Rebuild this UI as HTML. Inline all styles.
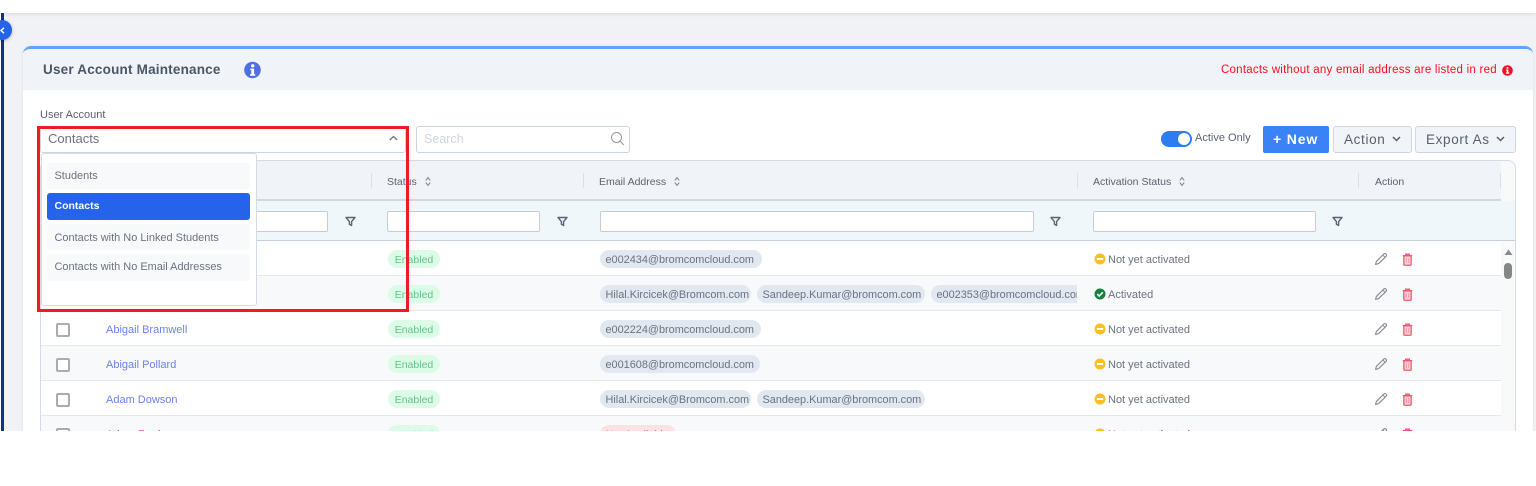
<!DOCTYPE html>
<html><head><meta charset="utf-8"><title>User Account Maintenance</title>
<style>
*{box-sizing:border-box}
html,body{margin:0;padding:0;width:1536px;height:486px;background:#fff;overflow:hidden;font-family:"Liberation Sans",sans-serif}
.a{position:absolute;white-space:nowrap}
#clip{position:absolute;left:0;top:0;width:1536px;height:431px;overflow:hidden;background:#f0f2f6;filter:blur(.3px)}
#top{position:absolute;left:0;top:0;width:1536px;height:13px;background:#fff;box-shadow:0 1px 4px rgba(0,0,0,.1)}
#nav{position:absolute;left:1px;top:13px;width:3px;height:418px;background:#14307e}
#navw{position:absolute;left:0;top:13px;width:1px;height:418px;background:#fff}
#card{position:absolute;left:23px;top:46px;width:1510px;height:420px;background:#fff;border-radius:8px 8px 0 0;border-top:3px solid #60a5fa;overflow:hidden;box-shadow:0 0 3px rgba(0,0,0,.08)}
.row{position:absolute;left:41px;width:1460px;height:35px;border-bottom:1px solid #e5e7eb}
.chk{position:absolute;left:15px;top:12px;width:14px;height:14px;border:2px solid #acacac;border-radius:2px;background:#fff}
.nm{position:absolute;left:65px;top:0;line-height:39px;font-size:11px;color:#6b82f2}
.en{position:absolute;left:347px;top:9px;height:18px;width:52px;border-radius:9px;background:#dcfce7;color:#65c28a;font-size:10.5px;line-height:20px;text-align:center}
.pill{position:absolute;top:9px;height:18px;border-radius:9px;background:#e2e8f0;color:#6b7280;font-size:10.9px;line-height:20px;padding-left:5.5px;overflow:hidden;white-space:nowrap}
.st{position:absolute;left:1067px;top:0;line-height:38px;font-size:11px;color:#6b7280}
.ic{position:absolute;left:1052.5px;top:12px}
.pen{position:absolute;left:1333px;top:11px}
.tr{position:absolute;left:1361px;top:11.5px}
.th{font-size:10.5px;color:#5b6270;line-height:15px;top:175px}
.sep{position:absolute;top:173px;width:1px;height:15px;background:#dbe0e7}
.fi{position:absolute;top:211px;height:21px;background:#fff;border:1px solid #c9cdd3;border-radius:2px}
.mi{position:absolute;left:47px;width:203px;border-radius:3px;background:#f8f9fb;color:#6b7280;font-size:10.96px;padding-left:7.5px}
.btn{position:absolute;top:126px;height:27px;background:#f1f4f9;border:1px solid #cfd6e0;border-radius:3px;color:#586171;font-size:13.5px;line-height:25px;letter-spacing:.65px}
</style></head>
<body>
<svg width="0" height="0" style="position:absolute">
<defs>
<symbol id="sort" viewBox="0 0 8 11"><path d="M1.8 4.4 4 1.6 6.2 4.4M1.8 6.6 4 9.4 6.2 6.6" fill="none" stroke="#7a8290" stroke-width="1"/></symbol>
<symbol id="fun" viewBox="0 0 11 11"><path d="M1 1.5h9L6.6 5.6v3.9L4.4 8.3V5.6z" fill="none" stroke="#5b6472" stroke-width="1.4" stroke-linejoin="round"/></symbol>
<symbol id="min" viewBox="0 0 12 12"><circle cx="6" cy="6" r="5.5" fill="#fbbf24"/><rect x="2.8" y="5" width="6.4" height="2" fill="#fff" rx=".6"/></symbol>
<symbol id="ok" viewBox="0 0 12 12"><circle cx="6" cy="6" r="5.5" fill="#15803d"/><path d="M3.2 6.1 5.2 8 8.8 4.3" fill="none" stroke="#fff" stroke-width="1.6"/></symbol>
<symbol id="pen" viewBox="0 0 14 14"><path d="M1.6 12.4l.8-3L9.8 2a1.4 1.4 0 0 1 2 0l.3.3a1.4 1.4 0 0 1 0 2L4.7 11.6z" fill="none" stroke="#8a8f96" stroke-width="1.2" stroke-linejoin="round"/><path d="M8.8 3l2.3 2.3" stroke="#8a8f96" stroke-width="1"/></symbol>
<symbol id="tr" viewBox="0 0 12 14"><path d="M2 3h8v9.3c0 .6-.4 1-1 1H3c-.6 0-1-.4-1-1z" fill="#fdd5da"/><path d="M.8 2.8h10.4M4 2.6V1.2h4v1.4M2 3v9.2c0 .7.5 1.1 1.1 1.1h5.8c.6 0 1.1-.4 1.1-1.1V3z" fill="none" stroke="#f4566f" stroke-width="1.4"/><path d="M4.7 5.5v5.5M7.3 5.5v5.5" stroke="#f4a0ae" stroke-width="1.3"/></symbol>
</defs></svg>

<div id="clip">
<div id="top"></div>
<div id="navw"></div><div id="nav"></div>
<div class="a" style="left:-8px;top:20px;width:20px;height:20px;border-radius:50%;background:#2563eb;box-shadow:0 1px 3px rgba(0,0,0,.25)"></div>
<svg class="a" style="left:0;top:27px" width="5" height="7" viewBox="0 0 5 7"><path d="M4 .8 1 3.5 4 6.2" fill="none" stroke="#fff" stroke-width="1.4"/></svg>

<div id="card"><div style="height:41px;background:#f0f3f8"></div></div>

<div class="a" style="left:43px;top:62px;font-size:13.5px;font-weight:bold;line-height:16px;color:#4b5563;letter-spacing:.2px">User Account Maintenance</div>
<svg class="a" style="left:244px;top:61px" width="17" height="18" viewBox="0 0 17 18"><circle cx="8.5" cy="9" r="8.3" fill="#4f70e3"/><circle cx="8.7" cy="4.8" r="1.7" fill="#fff"/><path d="M6.3 7.6h3.8v5.6h1.2v1.5H6v-1.5h1.3V9.1h-1z" fill="#fff"/></svg>
<div class="a" style="left:1221px;top:63px;font-size:11.5px;line-height:14px;color:#f5101f;letter-spacing:.24px">Contacts without any email address are listed in red</div>
<svg class="a" style="left:1502px;top:65px" width="11" height="11" viewBox="0 0 11 11"><circle cx="5.5" cy="5.5" r="5.3" fill="#ee1122"/><rect x="4.6" y="2" width="1.8" height="1.6" fill="#fff"/><path d="M3.9 4.5h2.5v3h.8v1.2H3.9V7.5h.8v-2h-.8z" fill="#fff"/></svg>

<div class="a" style="left:40px;top:108px;font-size:11px;line-height:14px;color:#5b6270">User Account</div>

<div class="a" style="left:40px;top:127px;width:366px;height:26px;border:1px solid #cbd5e1;border-radius:3px;background:#fff"></div>
<div class="a" style="left:48px;top:131px;font-size:13px;line-height:16px;color:#6b7280">Contacts</div>
<svg class="a" style="left:389px;top:135px" width="9" height="6" viewBox="0 0 9 6"><path d="M.8 5 4.5 1.5 8.2 5" fill="none" stroke="#6b7280" stroke-width="1.3"/></svg>

<div class="a" style="left:416px;top:126px;width:214px;height:27px;border:1px solid #cbd5e1;border-radius:3px;background:#fff"></div>
<div class="a" style="left:424px;top:131px;font-size:12.5px;line-height:16px;color:#cfd6e0">Search</div>
<svg class="a" style="left:610px;top:131px" width="15" height="15" viewBox="0 0 15 15"><circle cx="6.5" cy="6.5" r="5" fill="none" stroke="#9299a3" stroke-width="1"/><path d="M10.2 10.2 13.8 14" stroke="#9299a3" stroke-width="1.1"/></svg>

<div class="a" style="left:1161px;top:131px;width:31px;height:16px;border-radius:8px;background:#2f7bf0"></div>
<div class="a" style="left:1178px;top:133px;width:12px;height:12px;border-radius:50%;background:#fff"></div>
<div class="a" style="left:1195px;top:131px;font-size:11px;line-height:15px;color:#5b6270">Active Only</div>
<div class="a" style="left:1263px;top:126px;width:66px;height:27px;background:#3b82f6;border-radius:2px;color:#fff;font-size:14px;font-weight:bold;line-height:27px;padding-left:10px;letter-spacing:.85px">+ New</div>
<div class="btn" style="left:1333px;width:79px;padding-left:10px">Action</div>
<svg class="a" style="left:1392px;top:136px" width="9" height="6" viewBox="0 0 9 6"><path d="M1 1 4.5 4.5 8 1" fill="none" stroke="#586171" stroke-width="1.5"/></svg>
<div class="btn" style="left:1415px;width:101px;padding-left:10px">Export As</div>
<svg class="a" style="left:1496px;top:136px" width="9" height="6" viewBox="0 0 9 6"><path d="M1 1 4.5 4.5 8 1" fill="none" stroke="#586171" stroke-width="1.5"/></svg>

<!-- table -->
<div class="a" style="left:40px;top:160px;width:1476px;height:300px;border:1px solid #d5dbe5;border-radius:8px 8px 0 0;background:#f9f9f9;overflow:hidden">
 <div style="position:absolute;left:0;top:0;width:1460px;height:40px;background:#f0f3f8;border-bottom:2px solid #d3d8df"></div>
 <div style="position:absolute;left:0;top:40px;width:1475px;height:40px;background:#eff7fb;border-bottom:1px solid #c8cfd8"></div>
</div>
<div class="sep" style="left:371px"></div><div class="sep" style="left:583px"></div><div class="sep" style="left:1077px"></div><div class="sep" style="left:1358px"></div><div class="sep" style="left:1500px"></div>
<div class="a th" style="left:387px">Status</div><svg class="a" style="left:424px;top:176px" width="8" height="11"><use href="#sort"/></svg>
<div class="a th" style="left:599px">Email Address</div><svg class="a" style="left:672.5px;top:176px" width="8" height="11"><use href="#sort"/></svg>
<div class="a th" style="left:1093px">Activation Status</div><svg class="a" style="left:1177.5px;top:176px" width="8" height="11"><use href="#sort"/></svg>
<div class="a th" style="left:1375px">Action</div>

<div class="fi" style="left:100px;width:228px"></div>
<div class="fi" style="left:387px;width:153px"></div>
<div class="fi" style="left:600px;width:434px"></div>
<div class="fi" style="left:1093px;width:223px"></div>
<svg class="a" style="left:345px;top:216px" width="11" height="11"><use href="#fun"/></svg>
<svg class="a" style="left:557px;top:216px" width="11" height="11"><use href="#fun"/></svg>
<svg class="a" style="left:1050px;top:216px" width="11" height="11"><use href="#fun"/></svg>
<svg class="a" style="left:1332px;top:216px" width="11" height="11"><use href="#fun"/></svg>

<!-- rows -->
<div class="row" style="top:241px;background:#fff"><span class="chk"></span><span class="nm">Abbie Adams</span><span class="en">Enabled</span><span class="pill" style="left:559px;width:162px">e002434@bromcomcloud.com</span><svg class="ic" width="12" height="12"><use href="#min"/></svg><span class="st">Not yet activated</span><svg class="pen" width="14" height="14"><use href="#pen"/></svg><svg class="tr" width="11" height="13"><use href="#tr"/></svg></div>
<div class="row" style="top:276px;background:#f8f9fb"><span class="chk"></span><span class="nm">Abbie Brown</span><span class="en">Enabled</span><span class="pill" style="left:559px;width:151px">Hilal.Kircicek@Bromcom.com</span><span class="pill" style="left:716px;width:168px">Sandeep.Kumar@bromcom.com</span><span class="pill" style="left:890px;width:146px;border-radius:9px 0 0 9px">e002353@bromcomcloud.com</span><svg class="ic" width="12" height="12"><use href="#ok"/></svg><span class="st">Activated</span><svg class="pen" width="14" height="14"><use href="#pen"/></svg><svg class="tr" width="11" height="13"><use href="#tr"/></svg></div>
<div class="row" style="top:311px;background:#fff"><span class="chk"></span><span class="nm">Abigail Bramwell</span><span class="en">Enabled</span><span class="pill" style="left:559px;width:161px">e002224@bromcomcloud.com</span><svg class="ic" width="12" height="12"><use href="#min"/></svg><span class="st">Not yet activated</span><svg class="pen" width="14" height="14"><use href="#pen"/></svg><svg class="tr" width="11" height="13"><use href="#tr"/></svg></div>
<div class="row" style="top:346px;background:#f8f9fb"><span class="chk"></span><span class="nm">Abigail Pollard</span><span class="en">Enabled</span><span class="pill" style="left:559px;width:160px">e001608@bromcomcloud.com</span><svg class="ic" width="12" height="12"><use href="#min"/></svg><span class="st">Not yet activated</span><svg class="pen" width="14" height="14"><use href="#pen"/></svg><svg class="tr" width="11" height="13"><use href="#tr"/></svg></div>
<div class="row" style="top:381px;background:#fff"><span class="chk"></span><span class="nm">Adam Dowson</span><span class="en">Enabled</span><span class="pill" style="left:559px;width:151px">Hilal.Kircicek@Bromcom.com</span><span class="pill" style="left:716px;width:168px">Sandeep.Kumar@bromcom.com</span><svg class="ic" width="12" height="12"><use href="#min"/></svg><span class="st">Not yet activated</span><svg class="pen" width="14" height="14"><use href="#pen"/></svg><svg class="tr" width="11" height="13"><use href="#tr"/></svg></div>
<div class="row" style="top:416px;background:#f8f9fb"><span class="chk"></span><span class="nm" style="color:#f5101f">Adam Ford</span><span class="en">Enabled</span><span class="pill" style="left:559px;width:76px;background:#fee2e2;color:#f0606c">Not Available</span><svg class="ic" width="12" height="12"><use href="#min"/></svg><span class="st" style="color:#f5101f">Not yet activated</span><svg class="pen" width="14" height="14"><use href="#pen"/></svg><svg class="tr" width="11" height="13"><use href="#tr"/></svg></div>

<!-- scrollbar -->
<svg class="a" style="left:1504px;top:249px" width="9" height="7" viewBox="0 0 9 7"><path d="M4.5 .5 8.5 6H.5z" fill="#8a8a8a"/></svg>
<div class="a" style="left:1504px;top:263px;width:8px;height:16px;border-radius:4px;background:#868686"></div>

<!-- dropdown -->
<div class="a" style="left:41px;top:153px;width:216px;height:153px;background:#fff;border:1px solid #d5dbe5;border-radius:3px"></div>
<div class="a mi" style="top:163px;height:26px;line-height:27px">Students</div>
<div class="a mi" style="top:193px;height:27px;line-height:27px;background:#2563eb;color:#fff;font-weight:bold;font-size:10.5px">Contacts</div>
<div class="a mi" style="top:224px;height:26px;line-height:28px">Contacts with No Linked Students</div>
<div class="a mi" style="top:254px;height:27px;line-height:27px">Contacts with No Email Addresses</div>

<!-- red highlight -->
<div class="a" style="left:37px;top:126px;width:372px;height:186px;border:3px solid #ed1c24"></div>
</div>
</body></html>
